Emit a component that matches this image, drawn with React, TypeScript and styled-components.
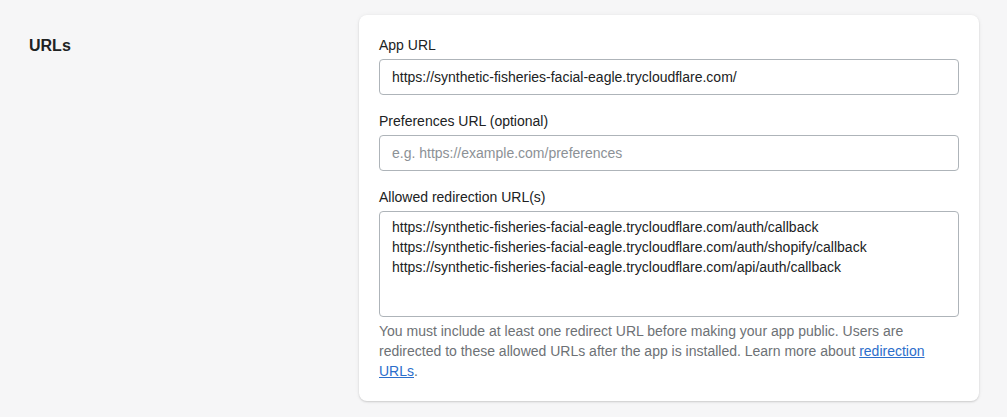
import styled, { createGlobalStyle } from 'styled-components';

const GlobalStyle = createGlobalStyle`
  html, body {
    margin: 0;
    padding: 0;
    background: #f6f6f7;
  }
  body {
    font-family: 'Liberation Sans', Arial, sans-serif;
    font-size: 14px;
    line-height: 20px;
    color: #202223;
  }
`;

type Field = {
  label: string;
  value?: string;
  placeholder?: string;
  multiline?: boolean;
};

const fields: Field[] = [
  { label: 'App URL', value: 'https://synthetic-fisheries-facial-eagle.trycloudflare.com/' },
  { label: 'Preferences URL (optional)', placeholder: 'e.g. https://example.com/preferences' },
  {
    label: 'Allowed redirection URL(s)',
    multiline: true,
    value: [
      'https://synthetic-fisheries-facial-eagle.trycloudflare.com/auth/callback',
      'https://synthetic-fisheries-facial-eagle.trycloudflare.com/auth/shopify/callback',
      'https://synthetic-fisheries-facial-eagle.trycloudflare.com/api/auth/callback',
    ].join('\n'),
  },
];

const App = () => {
  return (
    <>
      <GlobalStyle />
      <Page>
        <Annotation>
          <Heading>URLs</Heading>
        </Annotation>
        <Card>
          {fields.map((field) => (
            <FieldGroup key={field.label}>
              <Label>{field.label}</Label>
              {field.multiline ? (
                <TextArea defaultValue={field.value} rows={5} />
              ) : (
                <Input defaultValue={field.value} placeholder={field.placeholder} />
              )}
            </FieldGroup>
          ))}
          <HelpText>
            You must include at least one redirect URL before making your app public. Users are
            redirected to these allowed URLs after the app is installed. Learn more about{' '}
            <HelpLink href="#">redirection URLs</HelpLink>.
          </HelpText>
        </Card>
      </Page>
    </>
  );
};

const Page = styled('main')`
  display: flex;
  padding: 15px 28px 16px 29px;
  min-height: 417px;
  box-sizing: border-box;
`;

const Annotation = styled('div')`
  flex: 0 0 330px;
  padding-top: 20px;
`;

const Heading = styled('h2')`
  margin: -1px 0 0;
  font-size: 16px;
  line-height: 24px;
  font-weight: 700;
  color: #202223;
`;

const Card = styled('section')`
  flex: 0 0 620px;
  box-sizing: border-box;
  align-self: flex-start;
  background: #ffffff;
  border-radius: 8px;
  padding: 20px;
  box-shadow: 0 0 5px rgba(23, 24, 24, 0.05), 0 1px 2px rgba(0, 0, 0, 0.15);
  display: flex;
  flex-direction: column;
  gap: 16px;
`;

const FieldGroup = styled('div')`
  display: flex;
  flex-direction: column;
  gap: 4px;
`;

const Label = styled('label')`
  font-size: 14px;
  line-height: 20px;
  color: #202223;
`;

const fieldBase = `
  box-sizing: border-box;
  width: 100%;
  margin: 0;
  font-family: 'Liberation Sans', Arial, sans-serif;
  font-size: 14px;
  line-height: 20px;
  color: #202223;
  background: #ffffff;
  border: 1px solid #aeb4b9;
  border-radius: 4px;
  outline: none;
  padding: 7px 12px;

  &::placeholder {
    color: #8c9196;
  }
`;

const Input = styled('input')`
  ${fieldBase}
  height: 36px;
`;

const TextArea = styled('textarea')`
  ${fieldBase}
  height: 106px;
  padding: 5px 12px;
  resize: none;
  overflow: hidden;
`;

const HelpText = styled('p')`
  margin: -12px 0 0;
  font-size: 14px;
  line-height: 20px;
  color: #6d7175;
`;

const HelpLink = styled('a')`
  color: #2c6ecb;
  text-decoration: underline;
`;

export default App;
